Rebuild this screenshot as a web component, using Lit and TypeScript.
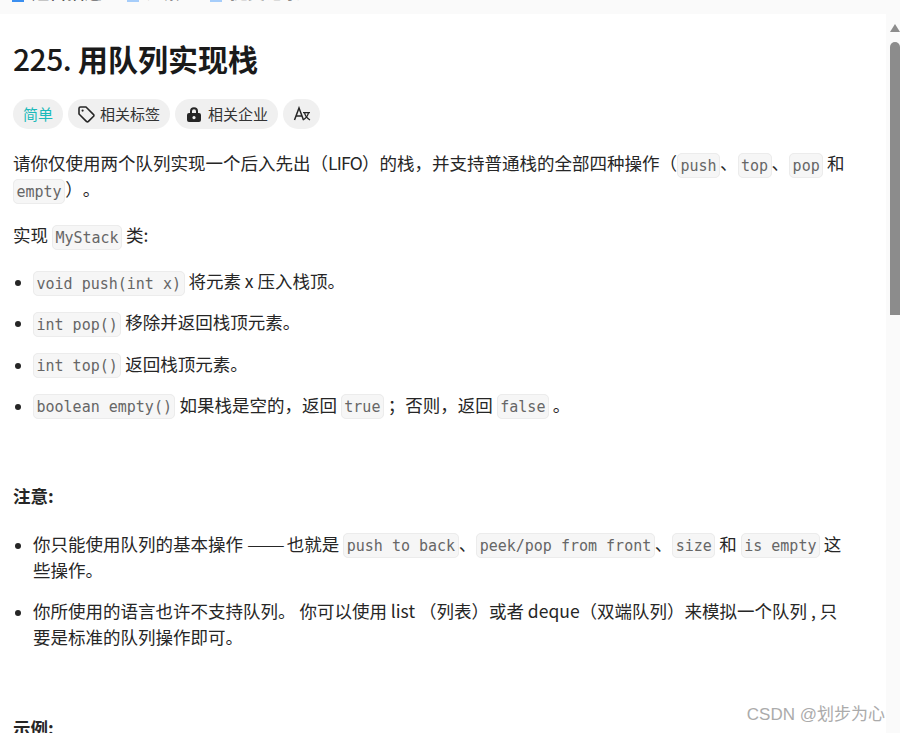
import { LitElement, html, css } from "lit";
import { customElement } from "lit/decorators.js";

@customElement("app-root")
export class AppRoot extends LitElement {
  static styles = css`
    :host {
      display: block;
      width: 900px;
      height: 733px;
      overflow: hidden;
      position: relative;
      background: #fff;
      font-family: "Noto Sans CJK SC", "Noto Sans", sans-serif;
      color: #262626;
      font-size: 17.5px;
      line-height: 26px;
      text-spacing-trim: space-all;
    }
    .top {
      height: 14px;
      background: #fafafa;
      overflow: hidden;
      display: flex;
      align-items: flex-start;
      padding-left: 12px;
      font-size: 17.5px;
      color: #8a8a8a;
    }
    .tab {
      display: flex;
      align-items: center;
      gap: 8px;
      height: 20px;
      flex: none;
      margin-top: -18px;
      line-height: 20px;
    }
    .tab.on {
      color: #262626;
      font-weight: 500;
    }
    .tab i {
      width: 12px;
      height: 20px;
      background: #a6cdfa;
    }
    .tab.on i {
      background: #3b8ff0;
    }
    .t2 {
      margin-left: 25px;
    }
    .t3 {
      margin-left: 28px;
    }
    .body {
      display: flex;
      height: 719px;
    }
    .main {
      flex: 1;
      min-width: 0;
      padding: 0 33px 0 13px;
      overflow: hidden;
    }
    h1 {
      margin: 23px 0 0;
      font-size: 30px;
      line-height: 42px;
      font-weight: 700;
      color: #1a1a1a;
    }
    h1 span {
      font-weight: 500;
      letter-spacing: -0.5px;
    }
    .chips {
      display: flex;
      gap: 5px;
      margin-top: 20px;
    }
    .chip {
      height: 30px;
      border-radius: 15px;
      background: #f0f0f0;
      display: flex;
      align-items: center;
      gap: 5px;
      padding: 0 10px;
      font-size: 15px;
      color: #333;
    }
    .easy {
      color: #1cbaba;
    }
    .corp {
      gap: 7px;
      padding-left: 12px;
    }
    .lang {
      padding: 0 9px 0 10px;
    }
    .chip svg {
      display: block;
      flex: none;
    }
    p {
      margin: 0;
    }
    .p1 {
      margin-top: 21px;
    }
    .p2 {
      margin-top: 20px;
    }
    code {
      font-family: "DejaVu Sans Mono", monospace;
      font-size: 15px;
      line-height: 18px;
      color: #666;
      background: #f6f6f6;
      border: 1px solid #ececec;
      border-radius: 5px;
      padding: 2.5px;
    }
    .lifo {
      letter-spacing: -0.8px;
    }
    .dash {
      display: inline-block;
      width: 36px;
      transform-origin: left center;
      transform: scaleX(1.29);
    }
    ul {
      margin: 20px 0 0;
      padding: 0 0 0 20px;
    }
    ul.notes {
      margin-top: 22px;
    }
    li {
      margin-bottom: 15.3px;
    }
    li::marker {
      font-size: 15px;
    }
    .note {
      margin-top: 65px;
      font-weight: 700;
    }
    .example {
      margin-top: 65px;
      font-weight: 700;
    }
    .scroll {
      width: 14px;
      flex: none;
      background: #fafafa;
      display: flex;
      flex-direction: column;
      align-items: flex-end;
    }
    .arrow {
      width: 0;
      height: 0;
      margin: 10px 0 0;
      border-left: 5px solid transparent;
      border-right: 5px solid transparent;
      border-bottom: 8px solid #8c8c8c;
    }
    .thumb {
      width: 10px;
      height: 273px;
      margin-top: 10px;
      background: #8c8c8c;
      border-radius: 5px 5px 0 0;
    }
    .mark {
      position: absolute;
      right: 15px;
      bottom: 6px;
      font-family: "Liberation Sans", "Noto Sans CJK SC", sans-serif;
      font-size: 17px;
      line-height: 24px;
      color: #ababab;
    }
  `;

  render() {
    return html`
      <div class="top">
        <div class="tab on"><i></i>题目描述</div>
        <div class="tab t2"><i></i>题解</div>
        <div class="tab t3"><i></i>提交记录</div>
      </div>
      <div class="body">
        <div class="main">
          <h1><span>225.</span> 用队列实现栈</h1>
          <div class="chips">
            <div class="chip easy">简单</div>
            <div class="chip">
              <svg width="17" height="17" viewBox="0 0 17 17" fill="none" stroke="#262626" stroke-width="1.6" stroke-linejoin="round">
                <path d="M1 2.5 Q1 1 2.5 1 H8 L15.6 8.6 Q16.2 9.4 15.6 10.2 L10.2 15.6 Q9.4 16.2 8.6 15.6 L1 8 Z" />
                <circle cx="4.6" cy="4.6" r="1.1" fill="#262626" stroke="none" />
              </svg>
              相关标签
            </div>
            <div class="chip corp">
              <svg width="14" height="15" viewBox="0 0 14 15" fill="#262626">
                <path fill-rule="evenodd" d="M3 6 V4.2 a4 4 0 0 1 8 0 V6 H12 a2 2 0 0 1 2 2 V13 a2 2 0 0 1 -2 2 H2 a2 2 0 0 1 -2 -2 V8 a2 2 0 0 1 2 -2 Z M5 6 H9 V4.2 a2 2 0 0 0 -4 0 Z M7 9 a1.6 1.6 0 1 0 0.01 0 Z" />
              </svg>
              相关企业
            </div>
            <div class="chip lang">
              <svg width="18" height="16" viewBox="0 0 18 16" fill="none" stroke="#262626" stroke-width="1.5">
                <path d="M1.5 14 L6 2 L10.5 14 M3 10 H9" />
                <path d="M10 6.7 H17 M11.5 6.7 Q12.5 11.5 17 14 M15.5 6.7 Q14.5 11.5 10 14" stroke-width="1.3" />
              </svg>
            </div>
          </div>
          <p class="p1">请你仅使用两个队列实现一个后入先出（<span class="lifo">LIFO</span>）的栈，并支持普通栈的全部四种操作（<code>push</code>、<code>top</code>、<code>pop</code> 和 <code>empty</code>）。</p>
          <p class="p2">实现 <code>MyStack</code> 类:</p>
          <ul>
            <li><code>void push(int x)</code> 将元素 x 压入栈顶。</li>
            <li><code>int pop()</code> 移除并返回栈顶元素。</li>
            <li><code>int top()</code> 返回栈顶元素。</li>
            <li><code>boolean empty()</code> 如果栈是空的，返回 <code>true</code> ；否则，返回 <code>false</code> 。</li>
          </ul>
          <p class="note">注意:</p>
          <ul class="notes">
            <li>你只能使用队列的基本操作 <span class="dash">——</span> 也就是 <code>push to back</code>、<code>peek/pop from front</code>、<code>size</code> 和 <code>is empty</code> 这些操作。</li>
            <li>你所使用的语言也许不支持队列。 你可以使用 list （列表）或者 deque（双端队列）来模拟一个队列 , 只要是标准的队列操作即可。</li>
          </ul>
          <p class="example">示例:</p>
        </div>
        <div class="scroll">
          <div class="arrow"></div>
          <div class="thumb"></div>
        </div>
      </div>
      <div class="mark">CSDN @划步为心</div>
    `;
  }
}
